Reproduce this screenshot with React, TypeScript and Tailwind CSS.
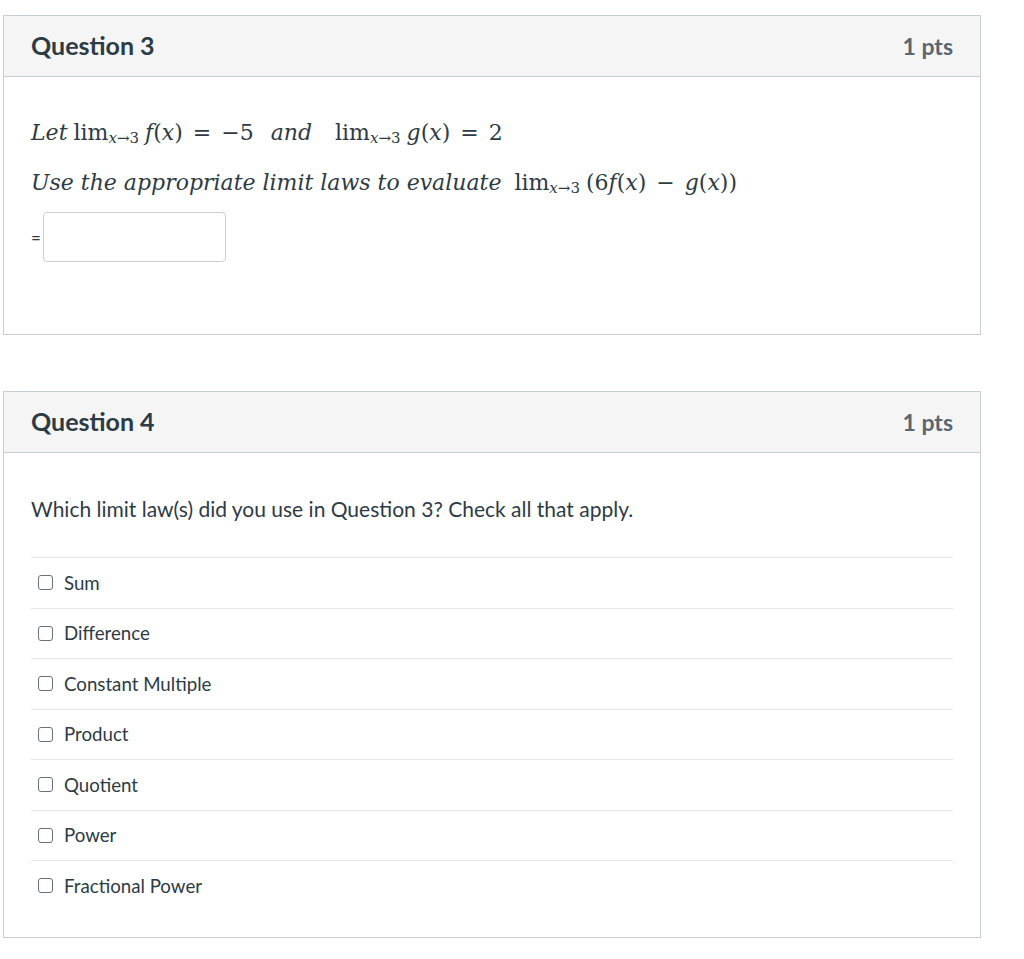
import React from 'react'

const laws = [
  'Sum',
  'Difference',
  'Constant Multiple',
  'Product',
  'Quotient',
  'Power',
  'Fractional Power',
]

function Lim() {
  return (
    <span className="mx-[6px] not-italic">
      lim
      <sub className="relative top-[3px] text-[15px] align-baseline">
        <i>x</i>→3
      </sub>
    </span>
  )
}

function Op({ children }: { children: React.ReactNode }) {
  return <span className="mx-[10px] not-italic">{children}</span>
}

function Header({ title }: { title: string }) {
  return (
    <div className="flex h-[61px] items-center justify-between border-b border-[#c7cdd1] bg-[#f5f5f5] px-[27px]">
      <h2 className="text-[25px] font-bold text-[#2d3b45]">{title}</h2>
      <span className="text-[23px] font-bold text-[#5b6670]">1 pts</span>
    </div>
  )
}

export default function App() {
  return (
    <div
      className="min-h-[959px] bg-white pt-[15px] pl-[3px] text-[#2d3b45]"
      style={{ fontFamily: 'Lato, "Open Sans", sans-serif' }}
    >
      {/* Question 3 */}
      <div className="w-[978px] border border-[#c7cdd1]">
        <Header title="Question 3" />
        <div className="px-[27px] pt-[40px] pb-[72px]">
          <div
            className="flex h-[30px] items-center whitespace-pre text-[22px] italic text-[#2d3b45]"
            style={{ fontFamily: '"DejaVu Serif", serif' }}
          >
            Let
            <Lim />
            <i>f</i>
            <span className="not-italic">(</span>
            <i>x</i>
            <span className="not-italic">)</span>
            <Op>=</Op>
            <span className="not-italic">−5</span>
            <i className="mx-[10px]"> and </i>
            <Lim />
            <i>g</i>
            <span className="not-italic">(</span>
            <i>x</i>
            <span className="not-italic">)</span>
            <Op>=</Op>
            <span className="not-italic">2</span>
          </div>
          <div
            className="mt-[20px] flex h-[30px] items-center whitespace-pre text-[22px] italic text-[#2d3b45]"
            style={{ fontFamily: '"DejaVu Serif", serif' }}
          >
            Use the appropriate limit laws to evaluate{' '}
            <Lim />
            <span className="not-italic">(6</span>
            <i>f</i>
            <span className="not-italic">(</span>
            <i>x</i>
            <span className="not-italic">)</span>
            <Op>−</Op>
            <i>g</i>
            <span className="not-italic">(</span>
            <i>x</i>
            <span className="not-italic">))</span>
          </div>
          <div className="mt-[15px] flex items-center">
            <span className="mt-[2px] text-[17px] text-[#2d3b45]">=</span>
            <input
              type="text"
              className="ml-[2px] h-[50px] w-[183px] rounded-[4px] border border-[#cfcfcf] bg-white outline-none"
            />
          </div>
        </div>
      </div>

      {/* Question 4 */}
      <div className="mt-[56px] w-[978px] border border-[#c7cdd1]">
        <Header title="Question 4" />
        <div className="px-[27px] pt-[42px] pb-[26px]">
          <p className="h-[27px] text-[21px] leading-[27px]">
            Which limit law(s) did you use in Question 3? Check all that apply.
          </p>
          <div className="mt-[35px]">
            {laws.map((law) => (
              <label
                key={law}
                className="flex h-[50.5px] items-center border-t border-[#e2e4e6] pl-[7px]"
              >
                <span className="h-[15px] w-[15px] rounded-[3px] border-[1.5px] border-[#6b7075] bg-white" />
                <span className="ml-[11px] text-[18.7px] text-[#2d3b45]">{law}</span>
              </label>
            ))}
          </div>
        </div>
      </div>
    </div>
  )
}
